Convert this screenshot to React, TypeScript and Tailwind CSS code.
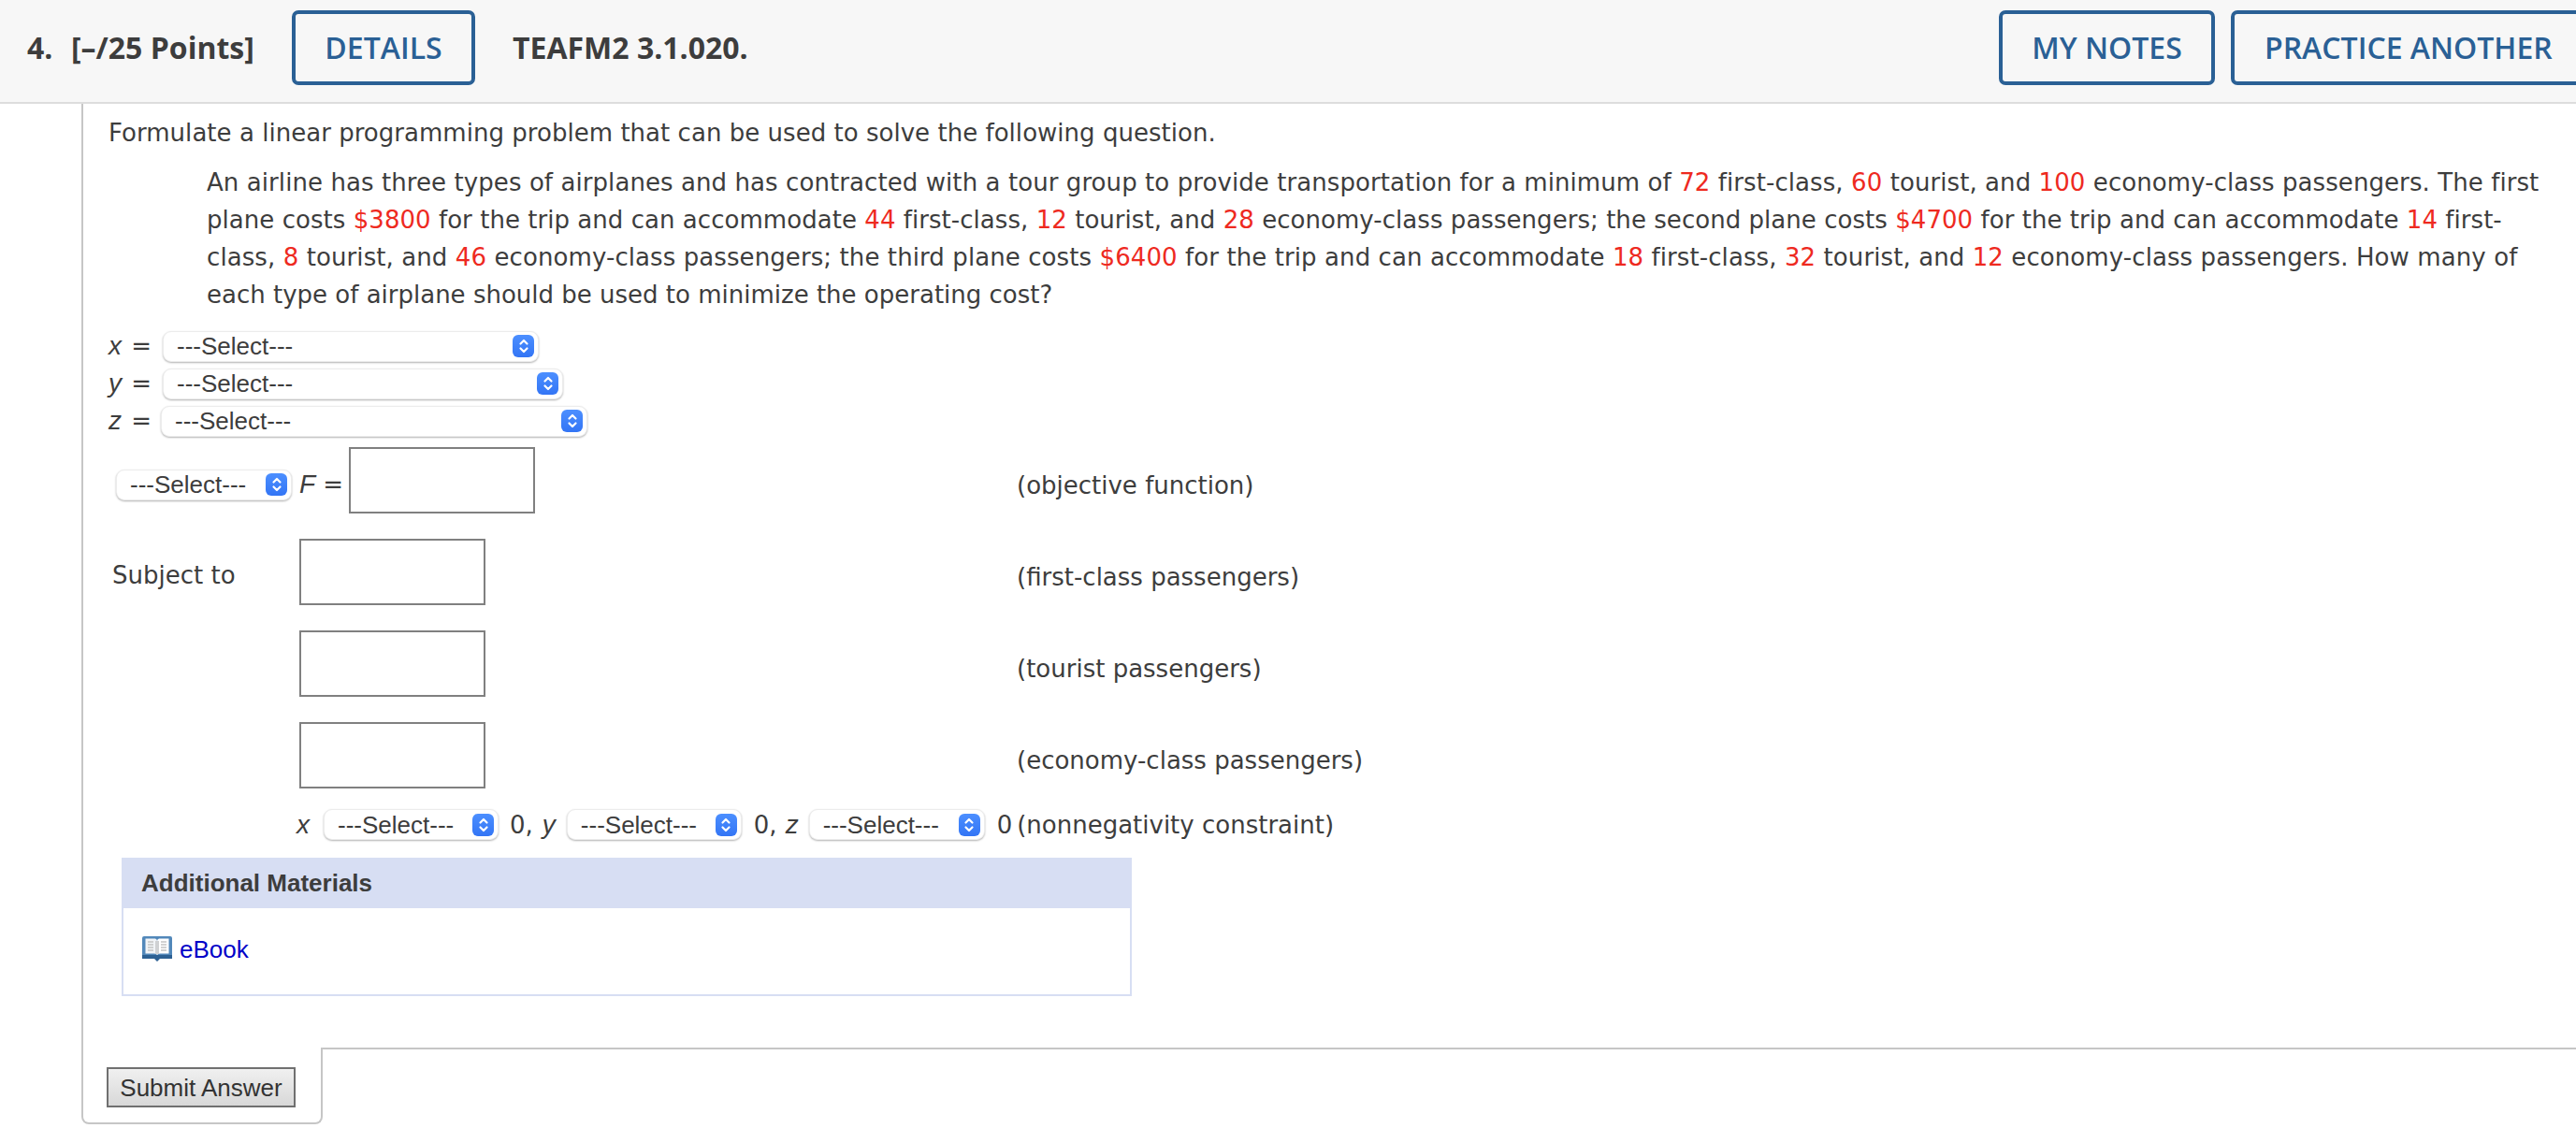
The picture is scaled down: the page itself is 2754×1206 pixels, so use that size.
import React from "react";

const R = ({ children }: { children: React.ReactNode }) => <span className="text-[#ee2a1f]">{children}</span>;

function Select({ w }: { w: string }) {
  return (
    <div className={`${w} h-[33px] shrink-0 flex items-center justify-between pl-[14px] pr-[4px] bg-white rounded-[9px] border border-[#ececec] shadow-[0_1px_2px_rgba(0,0,0,0.3)] font-['Liberation_Sans'] text-[26px] leading-none text-[#3d3d3d]`}>
      <span>---Select---</span>
      <span className="w-[23px] h-[24px] rounded-[6px] bg-gradient-to-b from-[#4c8fff] to-[#3375f5] flex items-center justify-center">
        <svg width="12" height="18" viewBox="0 0 12 18" fill="none" stroke="white" strokeWidth="2.2" strokeLinecap="round" strokeLinejoin="round">
          <path d="M2.5 6.5 L6 3 L9.5 6.5" />
          <path d="M2.5 11.5 L6 15 L9.5 11.5" />
        </svg>
      </span>
    </div>
  );
}

const Var = ({ children, className = "" }: { children: React.ReactNode; className?: string }) => (
  <i className={`font-['Liberation_Sans'] text-[28px] text-[#3d3d3d] ${className}`}>{children}</i>
);

const Box = () => <div className="w-[199px] h-[71px] shrink-0 border-2 border-[#808080] bg-white" />;

function Book() {
  return (
    <svg width="33" height="27" viewBox="0 0 33 27">
      <rect x="0" y="0" width="32" height="24" rx="2" fill="#5288ba" />
      <path d="M3.5 2.5 H14 Q16 3 16 5 V20 Q15 18.5 13 18.5 H3.5 Z" fill="#f1f4f7" />
      <path d="M28.5 2.5 H18 Q16 3 16 5 V20 Q17 18.5 19 18.5 H28.5 Z" fill="#ffffff" />
      <path d="M6 6 H12 M6 9 H12 M6 12 H12 M6 15 H12 M20 6 H26 M20 9 H26 M20 12 H26 M20 15 H26" stroke="#c4c4c4" strokeWidth="1.4" />
      <rect x="14" y="5" width="4" height="14" fill="#cfd1d3" />
      <path d="M0 20 H32 V24 H19 L16 27 L13 24 H0 Z" fill="#2c6093" />
    </svg>
  );
}

function Btn({ children, className = "" }: { children: React.ReactNode; className?: string }) {
  return (
    <div className={`h-[80px] shrink-0 flex items-center border-[4px] border-[#2a6095] rounded-[7px] text-[#2a6095] font-semibold ${className}`}>
      {children}
    </div>
  );
}

export default function App() {
  return (
    <div className="w-[2754px] h-[1206px] overflow-hidden bg-white font-['DejaVu_Sans',sans-serif] text-[26px] leading-[40px] text-[#3d3d3d]">
      <header className="h-[111px] border-b-2 border-[#dddddd] bg-[#f7f7f7] flex items-start pt-[11px] pl-[29px] font-['Open_Sans',sans-serif] text-[32px] whitespace-nowrap">
        <div className="h-[80px] flex items-center">
          <span className="font-bold w-[47px]">4.</span>
          <span className="font-bold w-[236px]">[–/25 Points]</span>
        </div>
        <Btn className="w-[196px] justify-center">DETAILS</Btn>
        <div className="h-[80px] flex items-center">
          <span className="font-bold ml-[40px]">TEAFM2 3.1.020.</span>
        </div>
        <div className="ml-auto flex gap-[17px]">
          <Btn className="w-[231px] justify-center">MY NOTES</Btn>
          <Btn className="w-[380px] pl-[32px] -mr-[11px]">PRACTICE ANOTHER</Btn>
        </div>
      </header>

      <main className="ml-[87px] border-l-2 border-[#c6c6c6] pl-[27px] pt-[11px] h-[1009px] whitespace-nowrap">
        <p className="tracking-[0.03px]">Formulate a linear programming problem that can be used to solve the following question.</p>
        <p className="mt-[13px] ml-[105px]">
          <span className="tracking-[0.08px]">An airline has three types of airplanes and has contracted with a tour group to provide transportation for a minimum of <R>72</R> first-class, <R>60</R> tourist, and <R>100</R> economy-class passengers. The first</span>
          <br />
          <span className="tracking-[0.045px]">plane costs <R>$3800</R> for the trip and can accommodate <R>44</R> first-class, <R>12</R> tourist, and <R>28</R> economy-class passengers; the second plane costs <R>$4700</R> for the trip and can accommodate <R>14</R> first-</span>
          <br />
          <span className="tracking-[0.09px]">class, <R>8</R> tourist, and <R>46</R> economy-class passengers; the third plane costs <R>$6400</R> for the trip and can accommodate <R>18</R> first-class, <R>32</R> tourist, and <R>12</R> economy-class passengers. How many of</span>
          <br />
          each type of airplane should be used to minimize the operating cost?
        </p>

        <div className="mt-[15px]">
          <div className="h-[40px] flex items-center">
            <span className="w-[58px]"><Var className="mr-[2px]">x</Var> =</span>
            <Select w="w-[402px]" />
          </div>
          <div className="h-[40px] flex items-center">
            <span className="w-[58px]"><Var className="mr-[2px]">y</Var> =</span>
            <Select w="w-[428px]" />
          </div>
          <div className="h-[40px] flex items-center">
            <span className="w-[56px]"><Var className="mr-[2px]">z</Var> =</span>
            <Select w="w-[456px]" />
          </div>
        </div>

        <div className="mt-[8px] flex flex-col gap-[27px]">
          <div className="flex">
            <div className="w-[971px] flex items-center">
              <div className="ml-[8px] pt-[9px]"><Select w="w-[188px]" /></div>
              <span className="ml-[8px] w-[53px] pt-[9px]"><Var>F</Var> =</span>
              <Box />
            </div>
            <span className="mt-[21px]">(objective function)</span>
          </div>
          <div className="flex">
            <div className="w-[971px] flex items-center">
              <span className="w-[204px] pl-[4px] pt-[6px]">Subject to</span>
              <Box />
            </div>
            <span className="mt-[21px]">(first-class passengers)</span>
          </div>
          <div className="flex">
            <div className="w-[971px] flex items-center pl-[204px]">
              <Box />
            </div>
            <span className="mt-[21px]">(tourist passengers)</span>
          </div>
          <div className="flex">
            <div className="w-[971px] flex items-center pl-[204px]">
              <Box />
            </div>
            <span className="mt-[21px]">(economy-class passengers)</span>
          </div>
        </div>

        <div className="mt-[22px] h-[33px] pl-[201px] flex items-center">
          <span className="w-[29px]"><Var>x</Var></span>
          <Select w="w-[187px]" />
          <span className="ml-[12px]">0,</span>
          <span className="ml-[10px] w-[26px]"><Var>y</Var></span>
          <Select w="w-[187px]" />
          <span className="ml-[13px]">0,</span>
          <span className="ml-[9px] w-[25px]"><Var>z</Var></span>
          <Select w="w-[188px]" />
          <span className="ml-[13px]">0</span>
          <span className="ml-[5px]">(nonnegativity constraint)</span>
        </div>

        <section className="mt-[19px] ml-[14px] w-[1080px] h-[148px] border-2 border-t-0 border-[#d7def3] font-['Liberation_Sans',sans-serif] text-[26px]">
          <h3 className="-mx-[2px] h-[54px] bg-[#d7def3] pl-[21px] flex items-center font-bold leading-none text-[#3d3d3d]">Additional Materials</h3>
          <div className="pl-[20px] pt-[30px] flex items-center gap-[7px] leading-none">
            <Book />
            <a className="text-[#0000c8]">eBook</a>
          </div>
        </section>
      </main>

      <footer className="ml-[87px] flex h-[82px]">
        <div className="w-[258px] h-[82px] border-2 border-t-0 border-[#c6c6c6] rounded-b-[8px] pl-[25px] pt-[21px]">
          <button className="w-[202px] h-[43px] border-2 border-[#707070] bg-gradient-to-b from-[#f0f0f0] to-[#d8d8d8] font-['Liberation_Sans',sans-serif] text-[26px] leading-none text-[#333333]">Submit Answer</button>
        </div>
        <div className="flex-1 border-t-2 border-[#c6c6c6]" />
      </footer>
    </div>
  );
}
